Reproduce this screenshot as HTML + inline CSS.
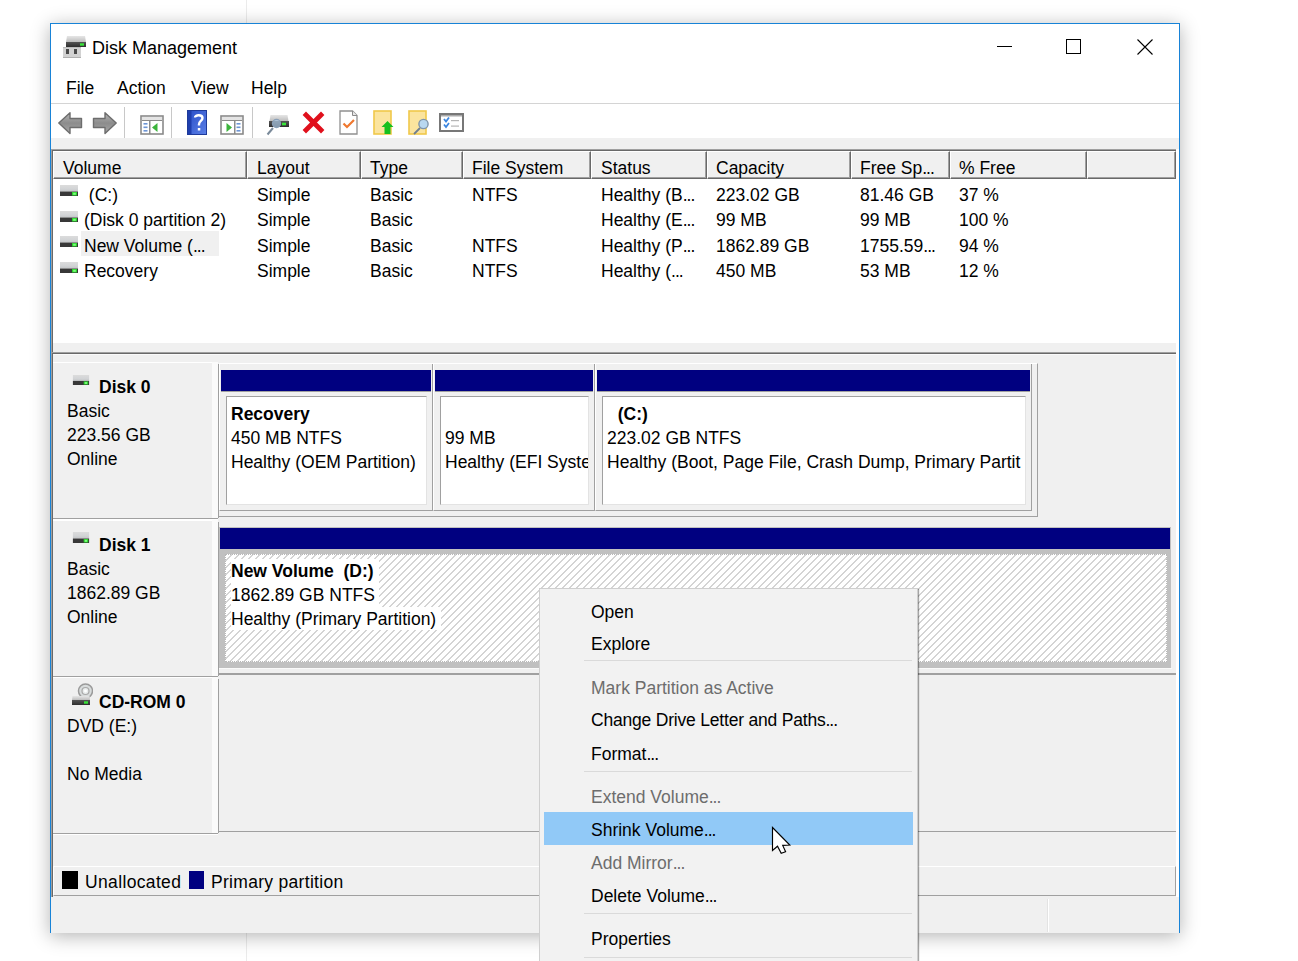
<!DOCTYPE html>
<html><head><meta charset="utf-8">
<style>
*{box-sizing:border-box}
html,body{margin:0;padding:0}
body{width:1298px;height:961px;overflow:hidden;background:#fff;position:relative;font-family:"Liberation Sans",sans-serif;color:#000}
.a{position:absolute}
.t{position:absolute;font-size:17.5px;line-height:20px;white-space:nowrap}
.b{font-weight:bold}
.g{color:#6d6d6d}
i{font-style:normal;letter-spacing:-1px}
.hc{position:absolute;top:151px;height:28px;background:#f0f0f0;border-top:1px solid #fff;border-left:1px solid #fff;box-shadow:inset -1px -1px 0 #a0a0a0;border-right:1px solid #696969;border-bottom:1px solid #696969}
.ib{position:absolute;background:#fff;border-top:1px solid #a0a0a0;border-left:1px solid #a0a0a0;border-right:1px solid #e3e3e3;border-bottom:1px solid #e3e3e3}
.bar{position:absolute;background:#000080}
.hatch{background:#fff repeating-linear-gradient(-45deg,#fff 0,#fff 3.95px,#d4d4d4 3.95px,#d4d4d4 4.95px)}
.ms{position:absolute;left:584px;width:328px;height:1px;background:#dadada}
</style></head><body>
<!-- background faint line -->
<div class="a" style="left:246px;top:0;width:1px;height:961px;background:#ebebeb"></div>

<!-- window -->
<div class="a" id="win" style="left:50px;top:23px;width:1130px;height:910px;background:#fff;border-left:1px solid #1883d7;border-right:1px solid #1883d7;border-top:1px solid #1883d7;box-shadow:0 3px 18px rgba(0,0,0,0.30)"></div>


<!-- svg defs -->
<svg width="0" height="0" style="position:absolute">
<defs>
<linearGradient id="gtop" x1="0" y1="0" x2="0" y2="1"><stop offset="0" stop-color="#e6e6e6"/><stop offset="1" stop-color="#bdbdbd"/></linearGradient>
<linearGradient id="gtop2" x1="0" y1="0" x2="0" y2="1"><stop offset="0" stop-color="#dcdcdc"/><stop offset="0.6" stop-color="#d2d4d6"/><stop offset="1" stop-color="#c4c6c8"/></linearGradient>
<linearGradient id="gbar" x1="0" y1="0" x2="0" y2="1"><stop offset="0" stop-color="#555"/><stop offset="1" stop-color="#2e2e2e"/></linearGradient>
<linearGradient id="garr" x1="0" y1="0" x2="0" y2="1"><stop offset="0" stop-color="#b4b4b4"/><stop offset="0.5" stop-color="#8c8c8c"/><stop offset="1" stop-color="#a8a8a8"/></linearGradient>
<linearGradient id="gbook" x1="0" y1="0" x2="1" y2="1"><stop offset="0" stop-color="#2a4fc8"/><stop offset="1" stop-color="#5a7fe6"/></linearGradient>
<symbol id="drv" viewBox="0 0 20 11">
<rect x="1" y="0" width="18" height="6.5" fill="url(#gtop2)"/>
<rect x="1" y="6.5" width="18" height="4.5" fill="#383838"/>
<rect x="13" y="7" width="5" height="3.5" fill="#2bd42b"/>
<rect x="14.2" y="7.8" width="2.6" height="2" fill="#7dff7d"/>
</symbol>
<symbol id="wnd" viewBox="0 0 24 20">
<rect x="1" y="1" width="22" height="18" fill="#fff" stroke="#8a8a8a" stroke-width="1.6"/>
<rect x="2" y="2" width="20" height="4" fill="#e4e4e4"/>
<line x1="2" y1="5.5" x2="22" y2="5.5" stroke="#8a8a8a" stroke-width="1"/>
</symbol>
</defs></svg>

<!-- title icon -->
<svg class="a" style="left:62px;top:35px" width="26" height="24" viewBox="0 0 26 24">
<path d="M5 1 H23 L24 7 H4 Z" fill="url(#gtop)"/>
<rect x="4" y="7" width="20" height="5" fill="url(#gbar)"/>
<rect x="18" y="8.3" width="4" height="2.4" fill="#39e639"/>
<rect x="1" y="12" width="18" height="11" fill="#d2d2d2"/>
<rect x="1" y="12" width="18" height="1" fill="#bdbdbd"/>
<rect x="1" y="22" width="18" height="1" fill="#b0b0b0"/>
<rect x="4" y="14" width="3" height="5" fill="#4a4a4a"/>
<rect x="12" y="14" width="3" height="5" fill="#4a4a4a"/>
</svg>

<!-- window buttons -->
<div class="a" style="left:997px;top:46px;width:15px;height:1px;background:#000"></div>
<div class="a" style="left:1066px;top:39px;width:15px;height:15px;border:1px solid #000"></div>
<svg class="a" style="left:1137px;top:39px" width="16" height="16" viewBox="0 0 16 16"><path d="M0.5 0.5 L15.5 15.5 M15.5 0.5 L0.5 15.5" stroke="#000" stroke-width="1.1"/></svg>

<!-- toolbar -->
<svg class="a" style="left:58px;top:112px" width="25" height="23" viewBox="0 0 25 23">
<path d="M0.8 11 L12 0.8 V6.5 H23.5 V15.5 H12 V21.5 Z" fill="url(#garr)" stroke="#6d6d6d" stroke-width="1.4" stroke-linejoin="round"/>
</svg>
<svg class="a" style="left:92px;top:112px" width="25" height="23" viewBox="0 0 25 23">
<path d="M24.2 11 L13 0.8 V6.5 H1.5 V15.5 H13 V21.5 Z" fill="url(#garr)" stroke="#6d6d6d" stroke-width="1.4" stroke-linejoin="round"/>
</svg>
<div class="a" style="left:124px;top:107px;width:1px;height:31px;background:#c8c8c8"></div>
<svg class="a" style="left:140px;top:115px" width="24" height="20"><use href="#wnd" width="24" height="20"/>
<rect x="9" y="6" width="1.5" height="13" fill="#8a8a8a"/>
<rect x="3.5" y="8" width="4" height="1.6" fill="#6d95d6"/><rect x="3.5" y="11.5" width="4" height="1.6" fill="#6d95d6"/><rect x="3.5" y="15" width="4" height="1.6" fill="#6d95d6"/>
<path d="M17.5 8 L12 12.5 L17.5 17 Z" fill="#3cb43c"/>
</svg>
<div class="a" style="left:171px;top:107px;width:1px;height:31px;background:#c8c8c8"></div>
<svg class="a" style="left:187px;top:110px" width="20" height="25" viewBox="0 0 20 25">
<rect x="0.5" y="0.5" width="19" height="24" fill="url(#gbook)" stroke="#1e3a9a" stroke-width="1"/>
<rect x="1" y="1" width="3.5" height="23" fill="#1f3fae"/>
<path d="M8 7.5 C8 4.5 15.5 4.5 15.5 8 C15.5 11 12 11 12 14.5 V15.5" fill="none" stroke="#fff" stroke-width="2.4"/>
<rect x="10.8" y="18" width="2.5" height="2.5" fill="#fff"/>
</svg>
<svg class="a" style="left:220px;top:115px" width="24" height="20"><use href="#wnd" width="24" height="20"/>
<rect x="14" y="6" width="1.5" height="13" fill="#8a8a8a"/>
<rect x="16.5" y="8" width="4" height="1.6" fill="#6d95d6"/><rect x="16.5" y="11.5" width="4" height="1.6" fill="#6d95d6"/><rect x="16.5" y="15" width="4" height="1.6" fill="#6d95d6"/>
<path d="M6.5 8 L12 12.5 L6.5 17 Z" fill="#3cb43c"/>
</svg>
<div class="a" style="left:252px;top:107px;width:1px;height:31px;background:#c8c8c8"></div>
<svg class="a" style="left:266px;top:114px" width="24" height="22" viewBox="0 0 24 22">
<path d="M4.5 1 H21.5 L22.5 7 H3.5 Z" fill="url(#gtop)"/>
<rect x="3" y="7" width="20" height="6" fill="url(#gbar)"/>
<rect x="16" y="8.7" width="4" height="2.6" fill="#39e639"/>
<line x1="7" y1="14" x2="1.5" y2="20.5" stroke="#7a8a9a" stroke-width="2"/>
<circle cx="10.5" cy="9.5" r="4.1" fill="#a9c8e4" fill-opacity="0.7" stroke="#8aa0b8" stroke-width="1.1"/>
</svg>
<svg class="a" style="left:302px;top:111px" width="23" height="23" viewBox="0 0 23 23">
<path d="M4 4 L19 19 M19 4 L4 19" stroke="#e0101c" stroke-width="4.8" stroke-linecap="square"/>
</svg>
<svg class="a" style="left:339px;top:110px" width="19" height="25" viewBox="0 0 19 25">
<path d="M1 1 H13.5 L18 5.5 V24 H1 Z" fill="#fff" stroke="#909090" stroke-width="1.3"/>
<path d="M13.5 1 V5.5 H18" fill="#e8e8e8" stroke="#8a8a8a" stroke-width="1"/>
<path d="M4.5 13.5 L8 17 L15 10" fill="none" stroke="#f07830" stroke-width="2.2"/>
</svg>
<svg class="a" style="left:373px;top:110px" width="21" height="25" viewBox="0 0 21 25">
<rect x="1" y="1" width="17" height="23" fill="#fbe49e" stroke="#f0c84a" stroke-width="1.6"/>

<path d="M14.5 11 L20.5 17 H17.5 V24 H11.5 V17 H8.5 Z" fill="#16c01e"/>
</svg>
<svg class="a" style="left:408px;top:110px" width="21" height="25" viewBox="0 0 21 25">
<rect x="1" y="1" width="17" height="23" fill="#fbe49e" stroke="#f0c84a" stroke-width="1.6"/>
<line x1="12" y1="18" x2="6" y2="24" stroke="#6f7f8f" stroke-width="1.8"/>
<circle cx="15.5" cy="14" r="4.6" fill="#b9d8f0" stroke="#7f95aa" stroke-width="1.4"/>
</svg>
<svg class="a" style="left:439px;top:113px" width="25" height="19" viewBox="0 0 25 19">
<rect x="1" y="1" width="23" height="17" fill="#fff" stroke="#777" stroke-width="2"/>
<rect x="2" y="2" width="21" height="1.5" fill="#aaa"/>
<path d="M5 6 L7 8.5 L10 4.5 M5 11.5 L7 14 L10 10" fill="none" stroke="#3b86e0" stroke-width="1.8"/>
<rect x="12" y="7" width="8" height="1.2" fill="#b5b5b5"/><rect x="12" y="12.5" width="8" height="1.2" fill="#b5b5b5"/>
</svg>

<!-- title -->
<div class="t" style="left:92px;top:38px;font-size:18px">Disk Management</div>

<!-- menu -->
<div class="t" style="left:66px;top:78px">File</div>
<div class="t" style="left:117px;top:78px">Action</div>
<div class="t" style="left:191px;top:78px">View</div>
<div class="t" style="left:251px;top:78px">Help</div>
<div class="a" style="left:51px;top:103px;width:1128px;height:1px;background:#d4d4d4"></div>

<!-- toolbar band -->
<div class="a" style="left:51px;top:138px;width:1128px;height:11px;background:#f0f0f0"></div>

<!-- list view -->
<div class="a" style="left:51px;top:149px;width:1125px;height:194px;background:#fff;border-top:1px solid #a0a0a0;border-left:1px solid #a0a0a0;box-shadow:inset 1px 1px 0 #696969"></div>
<div class="hc" style="left:53px;width:194px"></div>
<div class="hc" style="left:247px;width:114px"></div>
<div class="hc" style="left:361px;width:102px"></div>
<div class="hc" style="left:463px;width:128px"></div>
<div class="hc" style="left:591px;width:116px"></div>
<div class="hc" style="left:707px;width:144px"></div>
<div class="hc" style="left:851px;width:99px"></div>
<div class="hc" style="left:950px;width:137px"></div>
<div class="hc" style="left:1087px;width:89px"></div>

<!-- header text -->
<div class="t" style="left:63px;top:158px">Volume</div>
<div class="t" style="left:257px;top:158px">Layout</div>
<div class="t" style="left:370px;top:158px">Type</div>
<div class="t" style="left:472px;top:158px">File System</div>
<div class="t" style="left:601px;top:158px">Status</div>
<div class="t" style="left:716px;top:158px">Capacity</div>
<div class="t" style="left:860px;top:158px">Free Sp<i>...</i></div>
<div class="t" style="left:959px;top:158px">% Free</div>
<!-- rows -->
<div class="a" style="left:81px;top:231px;width:138px;height:25px;background:#f0f0f0"></div>
<div class="t" style="left:84px;top:185px;white-space:pre"> (C:)</div>
<div class="t" style="left:257px;top:185px;white-space:pre">Simple</div>
<div class="t" style="left:370px;top:185px;white-space:pre">Basic</div>
<div class="t" style="left:472px;top:185px;white-space:pre">NTFS</div>
<div class="t" style="left:601px;top:185px;white-space:pre">Healthy (B<i>...</i></div>
<div class="t" style="left:716px;top:185px;white-space:pre">223.02 GB</div>
<div class="t" style="left:860px;top:185px;white-space:pre">81.46 GB</div>
<div class="t" style="left:959px;top:185px;white-space:pre">37 %</div>
<div class="t" style="left:84px;top:210px;white-space:pre">(Disk 0 partition 2)</div>
<div class="t" style="left:257px;top:210px;white-space:pre">Simple</div>
<div class="t" style="left:370px;top:210px;white-space:pre">Basic</div>
<div class="t" style="left:601px;top:210px;white-space:pre">Healthy (E<i>...</i></div>
<div class="t" style="left:716px;top:210px;white-space:pre">99 MB</div>
<div class="t" style="left:860px;top:210px;white-space:pre">99 MB</div>
<div class="t" style="left:959px;top:210px;white-space:pre">100 %</div>
<div class="t" style="left:84px;top:236px;white-space:pre">New Volume (<i>...</i></div>
<div class="t" style="left:257px;top:236px;white-space:pre">Simple</div>
<div class="t" style="left:370px;top:236px;white-space:pre">Basic</div>
<div class="t" style="left:472px;top:236px;white-space:pre">NTFS</div>
<div class="t" style="left:601px;top:236px;white-space:pre">Healthy (P<i>...</i></div>
<div class="t" style="left:716px;top:236px;white-space:pre">1862.89 GB</div>
<div class="t" style="left:860px;top:236px;white-space:pre">1755.59<i>...</i></div>
<div class="t" style="left:959px;top:236px;white-space:pre">94 %</div>
<div class="t" style="left:84px;top:261px;white-space:pre">Recovery</div>
<div class="t" style="left:257px;top:261px;white-space:pre">Simple</div>
<div class="t" style="left:370px;top:261px;white-space:pre">Basic</div>
<div class="t" style="left:472px;top:261px;white-space:pre">NTFS</div>
<div class="t" style="left:601px;top:261px;white-space:pre">Healthy (<i>...</i></div>
<div class="t" style="left:716px;top:261px;white-space:pre">450 MB</div>
<div class="t" style="left:860px;top:261px;white-space:pre">53 MB</div>
<div class="t" style="left:959px;top:261px;white-space:pre">12 %</div>

<svg class="a" style="left:59px;top:185px" width="20" height="11"><use href="#drv"/></svg>
<svg class="a" style="left:59px;top:211px" width="20" height="11"><use href="#drv"/></svg>
<svg class="a" style="left:59px;top:236px" width="20" height="11"><use href="#drv"/></svg>
<svg class="a" style="left:59px;top:262px" width="20" height="11"><use href="#drv"/></svg>

<!-- splitter -->
<div class="a" style="left:51px;top:343px;width:1125px;height:9px;background:#f0f0f0;border-left:1px solid #a0a0a0;box-shadow:inset 1px 0 0 #696969"></div>

<!-- graph view -->
<div class="a" style="left:51px;top:352px;width:1125px;height:545px;background:#f0f0f0;border-top:1px solid #a0a0a0;border-left:1px solid #a0a0a0;box-shadow:inset 1px 1px 0 #696969"></div>

<!-- status bar -->
<div class="a" style="left:51px;top:897px;width:1128px;height:36px;background:#f0f0f0"></div>
<!-- graph content -->
<div class="a" style="left:53px;top:354px;width:1123px;height:1px;background:#fafafa"></div>
<div class="a" style="left:53px;top:362px;width:159px;height:156px;background:#f0f0f0;border-top:1px solid #fff"></div>
<div class="a" style="left:212px;top:362px;width:6px;height:156px;background:#fbfbfb"></div>
<div class="a" style="left:218px;top:364px;width:1px;height:154px;background:#a0a0a0"></div>
<div class="a" style="left:53px;top:518px;width:165px;height:1px;background:#a0a0a0"></div>
<div class="a" style="left:53px;top:519px;width:165px;height:1px;background:#fff"></div>
<div class="t b" style="left:99px;top:377px;">Disk 0</div>
<div class="t" style="left:67px;top:401px;">Basic</div>
<div class="t" style="left:67px;top:425px;">223.56 GB</div>
<div class="t" style="left:67px;top:449px;">Online</div>
<div class="a" style="left:53px;top:520px;width:159px;height:156px;background:#f0f0f0;border-top:1px solid #fff"></div>
<div class="a" style="left:212px;top:520px;width:6px;height:156px;background:#fbfbfb"></div>
<div class="a" style="left:218px;top:522px;width:1px;height:154px;background:#a0a0a0"></div>
<div class="a" style="left:53px;top:676px;width:165px;height:1px;background:#a0a0a0"></div>
<div class="a" style="left:53px;top:677px;width:165px;height:1px;background:#fff"></div>
<div class="t b" style="left:99px;top:535px;">Disk 1</div>
<div class="t" style="left:67px;top:559px;">Basic</div>
<div class="t" style="left:67px;top:583px;">1862.89 GB</div>
<div class="t" style="left:67px;top:607px;">Online</div>
<div class="a" style="left:53px;top:677px;width:159px;height:156px;background:#f0f0f0;border-top:1px solid #fff"></div>
<div class="a" style="left:212px;top:677px;width:6px;height:156px;background:#fbfbfb"></div>
<div class="a" style="left:218px;top:679px;width:1px;height:154px;background:#a0a0a0"></div>
<div class="a" style="left:53px;top:833px;width:165px;height:1px;background:#a0a0a0"></div>
<div class="a" style="left:53px;top:834px;width:165px;height:1px;background:#fff"></div>
<div class="t b" style="left:99px;top:692px;">CD-ROM 0</div>
<div class="t" style="left:67px;top:716px;">DVD (E:)</div>
<div class="t" style="left:67px;top:764px;">No Media</div>
<div class="a" style="left:219px;top:363px;width:819px;height:154px;border-right:1px solid #a0a0a0;border-bottom:1px solid #a0a0a0;border-top:1px solid #fff"></div>
<div class="a" style="left:219px;top:364px;width:214px;height:147px;border-right:1px solid #a0a0a0;border-bottom:1px solid #a0a0a0;border-left:1px solid #fff"></div>
<div class="a" style="left:221px;top:370px;width:210px;height:21px;background:#000080"></div>
<div class="a" style="left:221px;top:391px;width:210px;height:1px;background:#a0a0a0"></div>
<div class="ib" style="left:226px;top:396px;width:201px;height:109px;overflow:hidden">
<div class="t" style="left:4px;top:7px"><b>Recovery</b></div>
<div class="t" style="left:4px;top:31px">450 MB NTFS</div>
<div class="t" style="left:4px;top:55px">Healthy (OEM Partition)</div>
</div>
<div class="a" style="left:433px;top:364px;width:162px;height:147px;border-right:1px solid #a0a0a0;border-bottom:1px solid #a0a0a0;border-left:1px solid #fff"></div>
<div class="a" style="left:435px;top:370px;width:158px;height:21px;background:#000080"></div>
<div class="a" style="left:435px;top:391px;width:158px;height:1px;background:#a0a0a0"></div>
<div class="ib" style="left:440px;top:396px;width:149px;height:109px;overflow:hidden">
<div class="t" style="left:4px;top:31px">99 MB</div>
<div class="t" style="left:4px;top:55px">Healthy (EFI Syste</div>
</div>
<div class="a" style="left:595px;top:364px;width:437px;height:147px;border-right:1px solid #a0a0a0;border-bottom:1px solid #a0a0a0;border-left:1px solid #fff"></div>
<div class="a" style="left:597px;top:370px;width:433px;height:21px;background:#000080"></div>
<div class="a" style="left:597px;top:391px;width:433px;height:1px;background:#a0a0a0"></div>
<div class="ib" style="left:602px;top:396px;width:424px;height:109px;overflow:hidden">
<div class="t" style="left:5px;top:7px"><b>&nbsp;&nbsp;(C:)</b></div>
<div class="t" style="left:4px;top:31px">223.02 GB NTFS</div>
<div class="t" style="left:4px;top:55px">Healthy (Boot, Page File, Crash Dump, Primary Partit</div>
</div>
<div class="a" style="left:218px;top:527px;width:953px;height:141px;background:#c0c0c0;border-left:1px solid #a0a0a0"></div>
<div class="a" style="left:220px;top:528px;width:950px;height:21px;background:#000080"></div>
<div class="a hatch" style="left:225px;top:554px;width:942px;height:108px"></div>
<div class="a" style="left:225px;top:554px;width:942px;height:108px;border:1px dotted #b8b8b8"></div>
<div class="t b" style="left:231px;top:559px;padding:0 5px 0 0;background:#fff;line-height:24px;height:24px">New Volume&nbsp;&nbsp;(D:)</div>
<div class="t" style="left:231px;top:583px;padding:0 4px 0 0;background:#fff;line-height:24px;height:24px">1862.89 GB NTFS</div>
<div class="t" style="left:231px;top:607px;padding:0 5px 0 0;background:#fff;line-height:24px;height:23px">Healthy (Primary Partition)</div>
<div class="a" style="left:219px;top:668px;width:953px;height:1px;background:#fafafa"></div>
<div class="a" style="left:218px;top:673px;width:958px;height:2px;background:#a0a0a0"></div>
<div class="a" style="left:218px;top:831px;width:958px;height:1px;background:#a0a0a0"></div>
<div class="a" style="left:53px;top:866px;width:1123px;height:30px;background:#f0f0f0;border-top:1px solid #fff;border-left:1px solid #fff;border-right:1px solid #a0a0a0;border-bottom:1px solid #a0a0a0"></div>
<div class="a" style="left:62px;top:871px;width:16px;height:18px;background:#000"></div>
<div class="t" style="left:85px;top:872px;letter-spacing:0.35px">Unallocated</div>
<div class="a" style="left:189px;top:871px;width:15px;height:18px;background:#000080"></div>
<div class="t" style="left:211px;top:872px;letter-spacing:0.3px">Primary partition</div>
<div class="a" style="left:1047px;top:899px;width:1px;height:33px;background:#e3e3e3"></div>
<div class="a" style="left:1048px;top:899px;width:1px;height:33px;background:#fff"></div>



<svg class="a" style="left:72px;top:375px" width="18" height="10" viewBox="0 0 20 11" preserveAspectRatio="none"><use href="#drv" width="20" height="11"/></svg>
<svg class="a" style="left:72px;top:532px" width="18" height="11" viewBox="0 0 20 11" preserveAspectRatio="none"><use href="#drv" width="20" height="11"/></svg>
<!-- cdrom icon -->
<svg class="a" style="left:71px;top:683px" width="22" height="23" viewBox="0 0 22 23">
<circle cx="14.5" cy="8" r="7" fill="#d8dcdc" stroke="#9a9a9a" stroke-width="1.5"/>
<circle cx="14.5" cy="8" r="3.5" fill="#e8ecec" stroke="#a8a8a8" stroke-width="1.2"/>
<circle cx="14.5" cy="8" r="1.4" fill="#fff"/>
<path d="M1.5 13 H18.5 L19 17 H1 Z" fill="url(#gtop)"/>
<rect x="1" y="17" width="18" height="5" fill="url(#gbar)"/>
<rect x="13" y="18.3" width="4" height="2.4" fill="#39e639"/>
</svg>

<!-- context menu -->
<div class="a" style="left:539px;top:588px;width:379px;height:380px;background:#f2f2f2;border:1px solid #cfcfcf;box-shadow:1px 1px 1px rgba(0,0,0,0.35)"></div>
<div class="a" style="left:544px;top:812px;width:369px;height:33px;background:#91c9f7"></div>
<div class="t " style="left:591px;top:602px">Open</div>
<div class="t " style="left:591px;top:634px">Explore</div>
<div class="ms" style="top:660px"></div>
<div class="t g" style="left:591px;top:678px">Mark Partition as Active</div>
<div class="t " style="left:591px;top:710px;letter-spacing:-0.2px">Change Drive Letter and Paths<i>...</i></div>
<div class="t " style="left:591px;top:744px">Format<i>...</i></div>
<div class="ms" style="top:771px"></div>
<div class="t g" style="left:591px;top:787px">Extend Volume<i>...</i></div>
<div class="t " style="left:591px;top:820px">Shrink Volume<i>...</i></div>
<div class="t g" style="left:591px;top:853px">Add Mirror<i>...</i></div>
<div class="t " style="left:591px;top:886px">Delete Volume<i>...</i></div>
<div class="ms" style="top:913px"></div>
<div class="t " style="left:591px;top:929px">Properties</div>
<div class="ms" style="top:957px"></div>
<svg class="a" style="left:770px;top:825px" width="22" height="31" viewBox="0 0 22 31">
<path d="M2.5 2.5 V25.4 L7.5 21.2 L11.2 28.3 L15.6 26.7 L12.7 20.4 L19.8 20 Z" fill="#fff" stroke="#000" stroke-width="1.15" stroke-linejoin="miter"/>
</svg>
</body></html>
